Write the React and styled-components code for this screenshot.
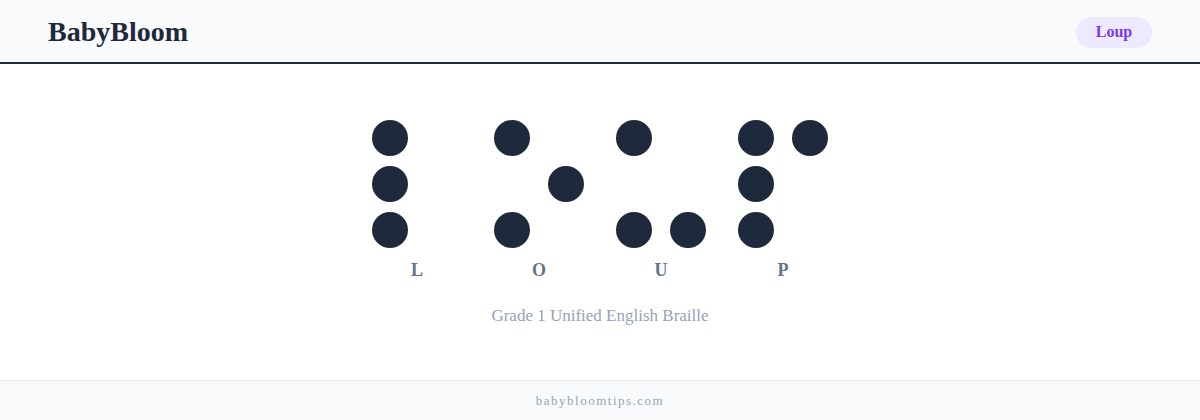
import React from 'react'
import styled, { createGlobalStyle } from 'styled-components'

const GlobalStyle = createGlobalStyle`
    html, body {
        margin: 0;
        padding: 0;
        background: #ffffff;
    }
    body {
        font-family: "Liberation Serif", "DejaVu Serif", serif;
    }
`

// dot numbers 1-3 left column, 4-6 right column
const letters = [
    { char: 'L', dots: [1, 2, 3] },
    { char: 'O', dots: [1, 3, 5] },
    { char: 'U', dots: [1, 3, 6] },
    { char: 'P', dots: [1, 2, 3, 4] },
]

const gridOrder = [1, 4, 2, 5, 3, 6]

const App = () => {
    return (
        <Page>
            <GlobalStyle />
            <Header>
                <Logo>BabyBloom</Logo>
                <WordPill>Loup</WordPill>
            </Header>
            <Main>
                <Cells>
                    {letters.map((l) => (
                        <Cell key={l.char}>
                            <DotGrid>
                                {gridOrder.map((n) => (
                                    <Dot key={n} $on={l.dots.includes(n)} />
                                ))}
                            </DotGrid>
                            <Letter>{l.char}</Letter>
                        </Cell>
                    ))}
                </Cells>
                <Caption>Grade 1 Unified English Braille</Caption>
            </Main>
            <Footer>babybloomtips.com</Footer>
        </Page>
    )
}

const Page = styled.div`
    min-height: 100vh;
    display: flex;
    flex-direction: column;
`
const Header = styled.header`
    height: 62px;
    display: flex;
    align-items: center;
    justify-content: space-between;
    padding: 0 48px;
    background: #f8fafc;
    border-bottom: 2px solid #1e293b;
`
const Logo = styled.div`
    font-weight: 700;
    font-size: 28px;
    line-height: 32px;
    padding-top: 2px;
    color: #1e293b;
`
const WordPill = styled.div`
    width: 76px;
    height: 31px;
    margin-top: 2px;
    display: flex;
    align-items: center;
    justify-content: center;
    border-radius: 16px;
    background: #ede9fe;
    color: #7c3aed;
    font-size: 16px;
    font-weight: 700;
`
const Main = styled.main`
    flex: 1;
    display: flex;
    flex-direction: column;
    align-items: center;
    padding-top: 56px;
`
const Cells = styled.div`
    display: flex;
    gap: 32px;
`
const Cell = styled.div`
    display: flex;
    flex-direction: column;
    align-items: center;
`
const DotGrid = styled.div`
    display: grid;
    grid-template-columns: 36px 36px;
    grid-auto-rows: 36px;
    gap: 10px 18px;
`
const Dot = styled.div`
    width: 36px;
    height: 36px;
    border-radius: 50%;
    background: ${(p) => (p.$on ? '#1e293b' : 'transparent')};
`
const Letter = styled.div`
    margin-top: 12px;
    font-size: 18px;
    line-height: 20px;
    font-weight: 700;
    color: #64748b;
`
const Caption = styled.div`
    margin-top: 26px;
    font-size: 17px;
    line-height: 20px;
    color: #94a3b8;
`
const Footer = styled.footer`
    height: 39px;
    display: flex;
    align-items: center;
    justify-content: center;
    background: #f8fafc;
    border-top: 1px solid #e2e8f0;
    font-size: 13px;
    letter-spacing: 1.5px;
    color: #94a3b8;
`

export default App
